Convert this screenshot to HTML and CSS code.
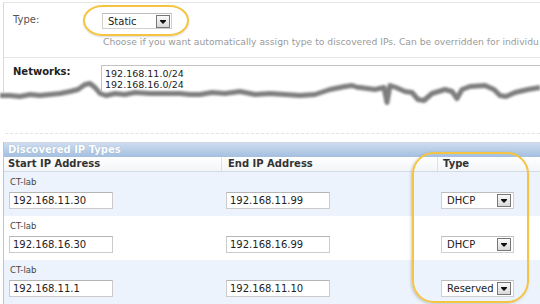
FILE: index.html
```html
<!DOCTYPE html>
<html lang="en">
<head>
    <meta charset="UTF-8">
    <title>Discovered IP Types</title>
    <link rel="stylesheet" href="styles.css">
</head>
<body>
    <div class="sheet">
        <div class="settings">
            <div class="field type-field">
                <div class="field-label">Type:</div>
                <div class="select select-static">
                    <span>Static</span>
                    <span class="drop"></span>
                </div>
                <div class="highlight-pill"></div>
            </div>
            <div class="hint">Choose if you want automatically assign type to discovered IPs. Can be overridden for individu</div>
            <div class="divider"></div>
            <div class="field net-field">
                <div class="field-label strong">Networks:</div>
                <div class="textarea">192.168.11.0/24<br>192.168.16.0/24<br>192.168.20.0/24</div>
            </div>
        </div>

        <!-- torn paper edge -->
        <svg class="tear" width="540" height="50" viewBox="0 0 540 50">
            <defs>
                <filter id="soft" x="-5%" y="-50%" width="110%" height="200%">
                    <feGaussianBlur stdDeviation="1.1"/>
                </filter>
            </defs>
            <path fill="#fff" d="M0 16 L10 16 L20 17 L30 15 L40 16 L50 15 L60 14 L70 12 L78 10 L85 5 L90 4 L95 8 L100 14 L106 16 L115 14 L125 15 L135 13 L150 14 L165 14 L180 14 L190 15 L200 15 L212 13 L225 14 L240 12 L255 15 L270 14 L285 15 L300 16 L315 15 L330 10 L345 7 L352 6 L358 8 L360 8 L375 10 L384 8 L387 23 L390 6 L396 8 L405 12 L412 13 L418 20 L424 21 L432 14 L445 10 L452 12 L457 19 L462 10 L470 7 L485 6 L494 10 L500 16 L506 17 L515 13 L528 10 L540 8 L540 50 L0 50 Z"/>
            <polyline filter="url(#soft)" transform="translate(0 3.5)" fill="none" stroke="#7e7e7e" stroke-width="5" stroke-linejoin="round" points="0,16 10,16 20,17 30,15 40,16 50,15 60,14 70,12 78,10 85,5 90,4 95,8 100,14 106,16 115,14 125,15 135,13 150,14 165,14 180,14 190,15 200,15 212,13 225,14 240,12 255,15 270,14 285,15 300,16 315,15 330,10 345,7 352,6 358,8 360,8 375,10 384,8 387,23 390,6 396,8 405,12 412,13 418,20 424,21 432,14 445,10 452,12 457,19 462,10 470,7 485,6 494,10 500,16 506,17 515,13 528,10 540,8"/>
        </svg>
    </div>

    <div class="scrap"></div>

    <div class="panel">
        <div class="panel-head">Discovered IP Types</div>
        <div class="grid cols">
            <div class="col col-start">Start IP Address</div>
            <div class="col col-end">End IP Address</div>
            <div class="col col-type">Type</div>
        </div>

        <div class="grid row">
            <div class="cell cell-start">
                <div class="tag">CT-lab</div>
                <div class="ip">192.168.11.30</div>
            </div>
            <div class="cell cell-end"><div class="ip">192.168.11.99</div></div>
            <div class="cell cell-type">
                <div class="select select-type"><span>DHCP</span><span class="drop"></span></div>
            </div>
        </div>

        <div class="grid row alt">
            <div class="cell cell-start">
                <div class="tag">CT-lab</div>
                <div class="ip">192.168.16.30</div>
            </div>
            <div class="cell cell-end"><div class="ip">192.168.16.99</div></div>
            <div class="cell cell-type">
                <div class="select select-type"><span>DHCP</span><span class="drop"></span></div>
            </div>
        </div>

        <div class="grid row">
            <div class="cell cell-start">
                <div class="tag">CT-lab</div>
                <div class="ip">192.168.11.1</div>
            </div>
            <div class="cell cell-end"><div class="ip">192.168.11.10</div></div>
            <div class="cell cell-type">
                <div class="select select-type"><span>Reserved</span><span class="drop"></span></div>
            </div>
        </div>

        <div class="highlight-box"></div>
    </div>
</body>
</html>
```

FILE: styles.css
```css
* {
    margin: 0;
    padding: 0;
    box-sizing: border-box;
}

body {
    width: 540px;
    height: 304px;
    overflow: hidden;
    background: #fff;
    color: #222;
    font-family: "DejaVu Sans", Verdana, sans-serif;
    font-size: 10px;
}

/* ---- settings sheet (top) ---- */
.sheet {
    position: relative;
    height: 100px;
}

.settings {
    height: 98px;
    margin: 2px 0 0 3px;
    border-top: 1px solid #e6e6e6;
    border-left: 1px solid #d9d9d9;
    overflow: hidden;
}

.field {
    display: flex;
    position: relative;
}

.field-label {
    width: 96px;
    flex-shrink: 0;
    padding-left: 9px;
    color: #555;
    line-height: 13px;
}

.field-label.strong {
    font-weight: bold;
    color: #222;
    line-height: 14px;
}

.type-field {
    margin-top: 10px;
    height: 16px;
}

.select {
    display: flex;
    align-items: center;
    justify-content: space-between;
    background: #fff;
    border: 1px solid #cfcfcf;
    border-top-color: #bdbdbd;
    color: #222;
}

.select-static {
    width: 70px;
    height: 16px;
    margin-left: 2px;
    padding: 0 1px 0 5px;
}

.select-type {
    width: 73px;
    height: 17px;
    padding: 0 2px 0 5px;
}

.drop {
    position: relative;
    width: 14px;
    height: 13px;
    border: 1px solid #777;
    background: linear-gradient(#fafafa, #d9d9d9);
}

.drop::after {
    content: "";
    position: absolute;
    left: 3px;
    top: 5px;
    border-left: 3px solid transparent;
    border-right: 3px solid transparent;
    border-top: 3px solid #111;
}

.drop::before {
    content: "";
    position: absolute;
    left: 3px;
    top: 4px;
    width: 6px;
    height: 1px;
    background: #111;
}

.highlight-pill {
    position: absolute;
    left: 79px;
    top: -8px;
    width: 106px;
    height: 31px;
    border: 2px solid #f6c443;
    border-radius: 20px / 16px;
    box-shadow: 0 1px 2px rgba(0, 0, 0, 0.15);
}

.hint {
    margin: 7px 0 0 99px;
    font-size: 9.2px;
    line-height: 11px;
    color: #9a9a9a;
    white-space: nowrap;
}

.divider {
    margin-top: 10px;
    border-top: 1px solid #e6e6e6;
}

.net-field {
    margin-top: 7px;
}

.net-field .field-label {
    width: 97px;
}

.textarea {
    flex: 1;
    height: 40px;
    padding: 2px 3px;
    border: 1px solid #c3c3c3;
    border-right: none;
    font-size: 9.5px;
    line-height: 11px;
    color: #222;
}

.tear {
    position: absolute;
    left: 0;
    top: 74px;
}

/* faint edge of the second clipping */
.scrap {
    margin: 31px 0 0 5px;
    border-top: 1px dashed #e3e3e3;
}

/* ---- discovered ip panel ---- */
.panel {
    position: relative;
    margin: 8px 0 0 3px;
    border-left: 1px solid #c4c4c4;
}

.panel-head {
    height: 15px;
    padding-left: 4px;
    border-top: 1px solid #d2d8e0;
    background: linear-gradient(#cddcef, #a4bfdf);
    color: #fff;
    font-weight: bold;
    line-height: 14px;
    text-shadow: 0 0 1px rgba(80, 110, 150, 0.4);
}

.grid {
    display: grid;
    grid-template-columns: 218px 216px 1fr;
}

.cols {
    height: 15px;
    border-bottom: 1px solid #d3dbe5;
    background: linear-gradient(#fff, #f3f5f8);
    font-weight: bold;
    color: #333;
    line-height: 14px;
}

.col-start,
.col-end {
    border-right: 1px solid #dde2e8;
}

.col-start { padding-left: 4px; }
.col-end { padding-left: 6px; }
.col-type { padding-left: 5px; }

.row {
    background: #edf3fc;
}

.row.alt {
    background: #fff;
}

.cell {
    display: flex;
    flex-direction: column;
    justify-content: flex-end;
    padding: 5px 0 7px;
}

.cell-start { padding-left: 5px; }
.cell-end { padding-left: 4px; }
.cell-type { padding-left: 3px; }

.tag {
    margin: 0 0 4px 1px;
    font-size: 8.5px;
    line-height: 11px;
    color: #444;
}

.ip {
    width: 104px;
    height: 17px;
    padding-left: 3px;
    background: #fff;
    border: 1px solid #cbcbcb;
    border-top-color: #b5b5b5;
    line-height: 15px;
    color: #222;
}

.highlight-box {
    position: absolute;
    left: 408px;
    top: 10px;
    width: 117px;
    height: 151px;
    border: 2px solid #f6c443;
    border-radius: 22px;
    box-shadow: -1px 1px 3px rgba(0, 0, 0, 0.2);
}
```
